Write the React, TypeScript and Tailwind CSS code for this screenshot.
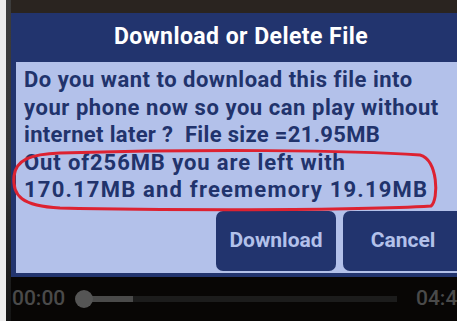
import React from "react";

export default function App() {
  const font = { fontFamily: "Roboto, 'Liberation Sans', sans-serif" };
  return (
    <div className="relative w-[457px] h-[321px] overflow-hidden bg-[#080605] flex" style={font}>
      <div className="w-[6px] shrink-0 bg-[#ececec]" />
      <div className="w-[5px] shrink-0 bg-gradient-to-b from-[#3c3c3c] via-[#363636] to-[#141414]" />
      <div className="flex-1 min-w-0 flex flex-col overflow-hidden">
        <div className="h-[13px] shrink-0 bg-[#2a2420]" />
        <div className="w-[460px] shrink-0 bg-[#22346e] px-[5px] pb-[4px] flex flex-col">
          <div className="h-[49px] flex items-center justify-center text-white font-bold text-[23px] tracking-[0.45px]">
            Download or Delete File
          </div>
          <div className="bg-[#b3c1ea] pl-[8px] pr-[3px] pt-[4px] pb-[2px] flex flex-col">
            <div className="text-[#21336c] font-bold text-[22px] leading-[27.5px] whitespace-pre">
              <div className="tracking-[0.5px]">Do you want to download this file into</div>
              <div className="tracking-[0.55px]">your phone now so you can play without</div>
              <div className="tracking-[0.33px]">internet later ?  File size =21.95MB</div>
              <div className="tracking-[0.9px]">Out of256MB you are left with</div>
              <div className="tracking-[1.2px]">170.17MB and freememory 19.19MB</div>
            </div>
            <div className="mt-[7px] flex justify-end gap-[7px]">
              <div className="w-[120px] h-[60px] rounded-[7px] bg-[#22346e] text-[#b3c1ea] font-bold text-[21px] flex items-center justify-center">
                Download
              </div>
              <div className="w-[120px] h-[60px] rounded-[7px] bg-[#22346e] text-[#b3c1ea] font-bold text-[21px] flex items-center justify-center">
                Cancel
              </div>
            </div>
          </div>
        </div>
        <div className="flex-1 flex items-center pl-[1px] text-[#4a4a4a] text-[21px] font-medium">
          <span className="w-[53px] shrink-0">00:00</span>
          <div className="relative ml-[10px] w-[322px] h-[18px] shrink-0 flex items-center">
            <div className="absolute left-[9px] right-0 h-[6px] bg-[#1c1c1c]" />
            <div className="absolute left-[9px] w-[49px] h-[6px] bg-[#4a4a4a]" />
            <div className="absolute left-0 w-[18px] h-[18px] rounded-full bg-[#555555]" />
          </div>
          <span className="ml-[19px] shrink-0 whitespace-nowrap">04:45</span>
        </div>
      </div>
      <svg className="absolute left-0 top-0 pointer-events-none" width="457" height="321" viewBox="0 0 457 321">
        <path
          d="M 60 153 C 200 149, 350 150, 420 155 C 438 159, 439 200, 431 206 C 350 211, 150 210, 60 208 C 22 206, 12 196, 14 176 C 16 160, 30 154, 60 153 Z"
          fill="none"
          stroke="#dd2231"
          strokeWidth="3"
        />
      </svg>
    </div>
  );
}
